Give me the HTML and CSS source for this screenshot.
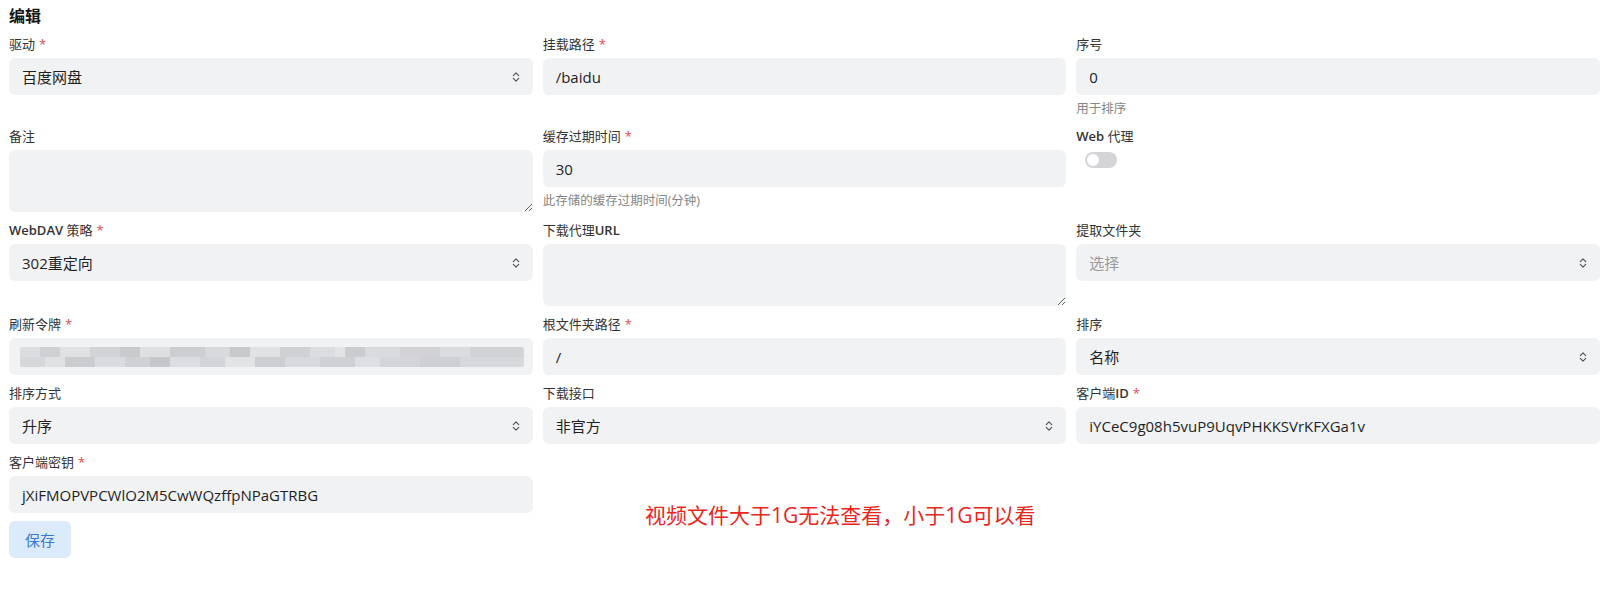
FILE: index.html
```html
<!DOCTYPE html>
<html lang="zh-CN">
<head>
<meta charset="utf-8">
<title>编辑</title>
<link rel="stylesheet" href="styles.css">
</head>
<body>
<div class="page">
  <h2 class="title">编辑</h2>
  <div class="grid">
    <div class="field">
      <label class="label">驱动<span class="req">*</span></label>
      <div class="control select"><span>百度网盘</span><svg class="chev" viewBox="0 0 8 12" width="8" height="12"><path d="M1.3 4.6 L4 1.9 L6.7 4.6 M1.3 7.4 L4 10.1 L6.7 7.4"/></svg></div>
    </div>
    <div class="field">
      <label class="label">挂载路径<span class="req">*</span></label>
      <div class="control">/baidu</div>
    </div>
    <div class="field">
      <label class="label">序号</label>
      <div class="control">0</div>
      <div class="help">用于排序</div>
    </div>

    <div class="field">
      <label class="label">备注</label>
      <textarea class="area"></textarea>
    </div>
    <div class="field">
      <label class="label">缓存过期时间<span class="req">*</span></label>
      <div class="control">30</div>
      <div class="help">此存储的缓存过期时间(分钟)</div>
    </div>
    <div class="field">
      <label class="label"><span class="en">Web</span> 代理</label>
      <div class="switch"><span class="knob"></span></div>
    </div>

    <div class="field">
      <label class="label"><span class="en">WebDAV</span> 策略<span class="req">*</span></label>
      <div class="control select"><span>302重定向</span><svg class="chev" viewBox="0 0 8 12" width="8" height="12"><path d="M1.3 4.6 L4 1.9 L6.7 4.6 M1.3 7.4 L4 10.1 L6.7 7.4"/></svg></div>
    </div>
    <div class="field">
      <label class="label">下载代理<span class="en">URL</span></label>
      <textarea class="area"></textarea>
    </div>
    <div class="field">
      <label class="label">提取文件夹</label>
      <div class="control select"><span class="placeholder">选择</span><svg class="chev" viewBox="0 0 8 12" width="8" height="12"><path d="M1.3 4.6 L4 1.9 L6.7 4.6 M1.3 7.4 L4 10.1 L6.7 7.4"/></svg></div>
    </div>

    <div class="field">
      <label class="label">刷新令牌<span class="req">*</span></label>
      <div class="control blurred"><div class="mosaic"></div></div>
    </div>
    <div class="field">
      <label class="label">根文件夹路径<span class="req">*</span></label>
      <div class="control">/</div>
    </div>
    <div class="field">
      <label class="label">排序</label>
      <div class="control select"><span>名称</span><svg class="chev" viewBox="0 0 8 12" width="8" height="12"><path d="M1.3 4.6 L4 1.9 L6.7 4.6 M1.3 7.4 L4 10.1 L6.7 7.4"/></svg></div>
    </div>

    <div class="field">
      <label class="label">排序方式</label>
      <div class="control select"><span>升序</span><svg class="chev" viewBox="0 0 8 12" width="8" height="12"><path d="M1.3 4.6 L4 1.9 L6.7 4.6 M1.3 7.4 L4 10.1 L6.7 7.4"/></svg></div>
    </div>
    <div class="field">
      <label class="label">下载接口</label>
      <div class="control select"><span>非官方</span><svg class="chev" viewBox="0 0 8 12" width="8" height="12"><path d="M1.3 4.6 L4 1.9 L6.7 4.6 M1.3 7.4 L4 10.1 L6.7 7.4"/></svg></div>
    </div>
    <div class="field">
      <label class="label">客户端<span class="en">ID</span><span class="req">*</span></label>
      <div class="control">iYCeC9g08h5vuP9UqvPHKKSVrKFXGa1v</div>
    </div>

    <div class="field">
      <label class="label">客户端密钥<span class="req">*</span></label>
      <div class="control">jXiFMOPVPCWlO2M5CwWQzffpNPaGTRBG</div>
    </div>
  </div>
  <button class="save">保存</button>
  <p class="note">视频文件大于1G无法查看，小于1G可以看</p>
</div>
</body>
</html>
```
FILE: styles.css
```css
html, body {
  margin: 0;
  padding: 0;
  background: #ffffff;
}
body {
  font-family: "Open Sans", "Noto Sans CJK SC", sans-serif;
  color: #1f1f1f;
}
.page {
  position: relative;
  padding: 4px 9px 0 9px;
}
.title {
  margin: 0 0 6px 0;
  font-size: 16px;
  line-height: 24px;
  font-weight: 700;
  color: #151515;
}
.grid {
  display: grid;
  grid-template-columns: repeat(3, 1fr);
  column-gap: 10px;
  row-gap: 8px;
  align-items: start;
}
.field {
  display: flex;
  flex-direction: column;
  min-width: 0;
}
.label {
  font-size: 13px;
  line-height: 20px;
  font-weight: 400;
  color: #333333;
  margin-bottom: 4px;
}
.en {
  font-weight: 600;
}
.req {
  color: #e5484d;
  margin-left: 4px;
  font-weight: 400;
}
.control {
  height: 37px;
  box-sizing: border-box;
  background: #f1f2f4;
  border-radius: 6px;
  padding: 0 13px;
  display: flex;
  align-items: center;
  font-size: 15px;
  color: #1f1f1f;
}
.select {
  justify-content: space-between;
}
.chev {
  fill: none;
  stroke: #555555;
  stroke-width: 1.2;
  stroke-linecap: round;
  stroke-linejoin: round;
}
.placeholder {
  color: #9a9a9a;
}
.help {
  font-size: 12.5px;
  line-height: 18px;
  margin-top: 5px;
  color: #858585;
}
.area {
  height: 62px;
  box-sizing: border-box;
  background: #f1f2f4;
  border: none;
  border-radius: 6px;
  padding: 8px 13px;
  font-family: inherit;
  font-size: 15px;
  resize: vertical;
  outline: none;
  display: block;
  width: 100%;
}
.switch {
  width: 32px;
  height: 16px;
  margin: 2px 0 0 9px;
  border-radius: 8px;
  background: #d4d4d8;
  display: flex;
  align-items: center;
  padding: 2px;
  box-sizing: border-box;
}
.knob {
  width: 12px;
  height: 12px;
  border-radius: 50%;
  background: #ffffff;
}
.blurred {
  padding: 0 9px 0 11px;
}
.mosaic {
  flex: 1;
  height: 20px;
  border-radius: 2px;
  background:
    linear-gradient(90deg,
      #dcdde0 0, #dcdde0 20px, #cfd0d3 20px, #cfd0d3 40px, #e0e1e3 40px, #e0e1e3 70px,
      #d2d3d6 70px, #d2d3d6 100px, #c9cacd 100px, #c9cacd 120px, #dedfe1 120px, #dedfe1 150px,
      #cdced1 150px, #cdced1 185px, #d8d9dc 185px, #d8d9dc 210px, #c8c9cc 210px, #c8c9cc 230px,
      #e1e2e4 230px, #e1e2e4 260px, #d0d1d4 260px, #d0d1d4 290px, #dcdde0 290px, #dcdde0 315px,
      #e3e4e6 315px, #e3e4e6 325px, #cbccd0 325px, #cbccd0 345px, #d9dadd 345px, #d9dadd 380px,
      #d2d2d6 380px, #d2d2d6 420px, #dbdcdf 420px, #dbdcdf 450px, #d1d2d5 450px, #d1d2d5 500px)
      top / 100% 50% no-repeat,
    linear-gradient(90deg,
      #d6d7da 0, #d6d7da 25px, #e0e1e3 25px, #e0e1e3 45px, #cbccd0 45px, #cbccd0 75px,
      #dadbde 75px, #dadbde 105px, #d0d1d4 105px, #d0d1d4 130px, #c6c7cb 130px, #c6c7cb 150px,
      #dcdde0 150px, #dcdde0 180px, #d3d4d7 180px, #d3d4d7 205px, #e2e3e5 205px, #e2e3e5 235px,
      #cdced2 235px, #cdced2 265px, #d8d9dc 265px, #d8d9dc 300px, #d0d1d4 300px, #d0d1d4 335px,
      #dedfe2 335px, #dedfe2 360px, #d4d5d8 360px, #d4d5d8 400px, #cfd0d3 400px, #cfd0d3 440px,
      #d7d8db 440px, #d7d8db 500px)
      bottom / 100% 50% no-repeat;
}
.save {
  margin-top: 8px;
  height: 37px;
  padding: 0 16px;
  border: none;
  border-radius: 6px;
  background: #dcebfc;
  color: #3a78d0;
  font-family: inherit;
  font-size: 15px;
  cursor: pointer;
}
.note {
  position: absolute;
  left: 645px;
  top: 501px;
  margin: 0;
  font-size: 21px;
  line-height: 28px;
  color: #e8261c;
}
```
